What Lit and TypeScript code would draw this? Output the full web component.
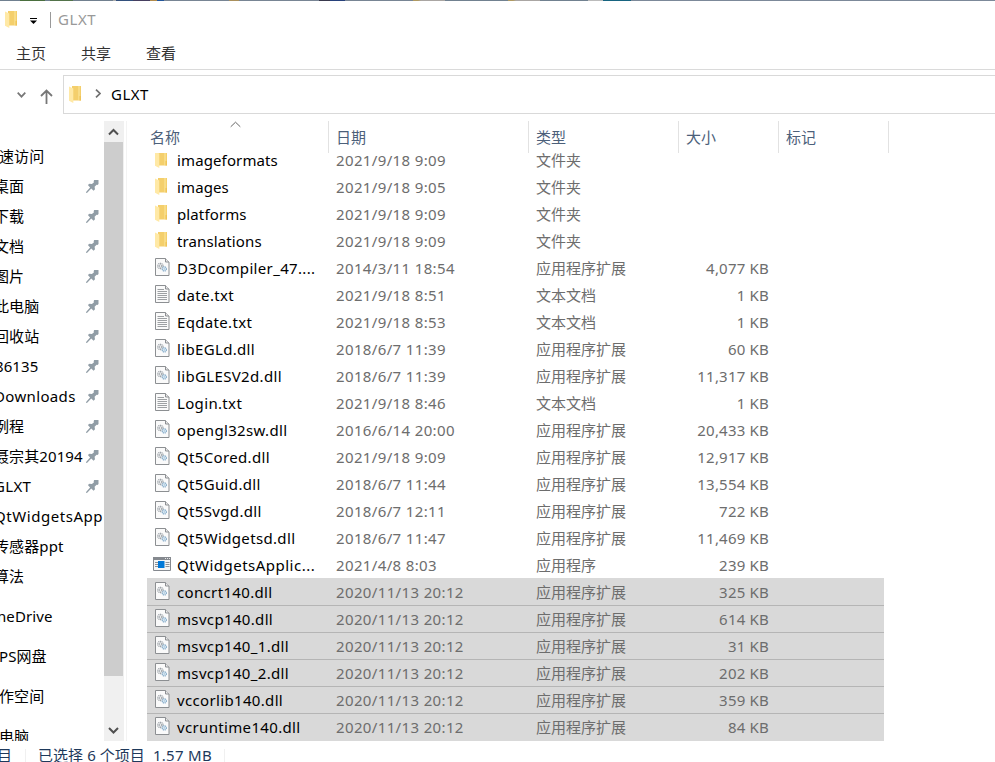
import { LitElement, html, css, svg } from "lit";
import { customElement, property } from "lit/decorators.js";
import { classMap } from "lit/directives/class-map.js";

type Kind = "folder" | "dll" | "txt" | "exe";

const TYPES: Record<Kind, string> = {
  folder: "文件夹",
  dll: "应用程序扩展",
  txt: "文本文档",
  exe: "应用程序",
};

// name, modified, kind, size
const FILES: [string, string, Kind, string][] = [
  ["imageformats", "2021/9/18 9:09", "folder", ""],
  ["images", "2021/9/18 9:05", "folder", ""],
  ["platforms", "2021/9/18 9:09", "folder", ""],
  ["translations", "2021/9/18 9:09", "folder", ""],
  ["D3Dcompiler_47....", "2014/3/11 18:54", "dll", "4,077 KB"],
  ["date.txt", "2021/9/18 8:51", "txt", "1 KB"],
  ["Eqdate.txt", "2021/9/18 8:53", "txt", "1 KB"],
  ["libEGLd.dll", "2018/6/7 11:39", "dll", "60 KB"],
  ["libGLESV2d.dll", "2018/6/7 11:39", "dll", "11,317 KB"],
  ["Login.txt", "2021/9/18 8:46", "txt", "1 KB"],
  ["opengl32sw.dll", "2016/6/14 20:00", "dll", "20,433 KB"],
  ["Qt5Cored.dll", "2021/9/18 9:09", "dll", "12,917 KB"],
  ["Qt5Guid.dll", "2018/6/7 11:44", "dll", "13,554 KB"],
  ["Qt5Svgd.dll", "2018/6/7 12:11", "dll", "722 KB"],
  ["Qt5Widgetsd.dll", "2018/6/7 11:47", "dll", "11,469 KB"],
  ["QtWidgetsApplic...", "2021/4/8 8:03", "exe", "239 KB"],
  ["concrt140.dll", "2020/11/13 20:12", "dll", "325 KB"],
  ["msvcp140.dll", "2020/11/13 20:12", "dll", "614 KB"],
  ["msvcp140_1.dll", "2020/11/13 20:12", "dll", "31 KB"],
  ["msvcp140_2.dll", "2020/11/13 20:12", "dll", "202 KB"],
  ["vccorlib140.dll", "2020/11/13 20:12", "dll", "359 KB"],
  ["vcruntime140.dll", "2020/11/13 20:12", "dll", "84 KB"],
];
const FIRST_SELECTED = 16;

const NAV: [string, number, boolean, boolean][] = [
  ["速访问", -1, false, false],
  ["桌面", -6, true, false],
  ["下载", -6, true, false],
  ["文档", -6, true, false],
  ["图片", -6, true, false],
  ["此电脑", -6, true, false],
  ["回收站", -6, true, false],
  ["86135", -5, true, false],
  ["Downloads", -6, true, false],
  ["例程", -6, true, false],
  ["聂宗其20194", -6, true, false],
  ["GLXT", -6, true, false],
  ["QtWidgetsApp", -6, false, false],
  ["传感器ppt", -6, false, false],
  ["算法", -6, false, false],
  ["neDrive", -3, false, true],
  ["PS网盘", -1, false, true],
  ["作空间", -1, false, true],
  ["电脑", -1, false, true],
];

const folder = svg`
  <path d="M3 0h9v14.500H3z" fill="#f4cf6c"/>
  <path d="M9 0h2v14H9z" fill="#f8dc86"/>
  <path d="M10.500 10h1.500v4.500h-1.500z" fill="#efc458"/>
  <path d="M0 .5L4.300 2.500V17L0 14.800z" fill="#ffe9a6"/>`;

const sheet = svg`
  <path d="M.5 .5h10l3.500 3.500v13.500H.5z" fill="#fafafa" stroke="#8c8f92"/>
  <path d="M10.500 .5v3.500h3.500" fill="#e8e8e8" stroke="#8c8f92"/>`;

const gears = svg`
  <circle cx="5.400" cy="8" r="2.700" fill="none" stroke="#969da3" stroke-width="1.200" stroke-dasharray="1.100 .6"/>
  <circle cx="5.400" cy="8" r="1.300" fill="none" stroke="#969da3" stroke-width=".8"/>
  <circle cx="9.300" cy="10.900" r="2.100" fill="#dcebf6" stroke="#86abc8" stroke-width="1.200" stroke-dasharray="1.100 .5"/>
  <circle cx="9.300" cy="10.900" r=".7" fill="#9dbdd4"/>`;

const lines = svg`<path d="M2.500 4.500h6.500M2.500 6.500h9.500M2.500 8.500h9.500M2.500 10.500h9.500M2.500 12.500h9.500M2.500 14.500h9.500" stroke="#9da0a3"/>`;

@customElement("file-icon")
class FileIcon extends LitElement {
  @property() kind: Kind = "folder";
  static styles = css`
    :host { display: block; }
    svg { display: block; overflow: visible; }
  `;
  render() {
    if (this.kind === "folder") return html`<svg width="12" height="17">${folder}</svg>`;
    if (this.kind === "exe")
      return html`<svg width="18" height="14">
        <path d="M.5 .5h17v13H.5z" fill="#f5f5f5" stroke="#85898f"/>
        <path d="M0 0h18v3H0z" fill="#85898f"/>
        <path d="M12 1.500h1M14 1.500h1M16 1.500h1" stroke="#e8e8e8"/>
        <path d="M2 5.500h3M2 7.500h3M2 9.500h3M12.500 5.500h4M12.500 7.500h4M12.500 9.500h4" stroke="#8d9197"/>
        <path d="M5 4h6.500v7H5z" fill="#0078d7"/>
      </svg>`;
    return html`<svg width="15" height="18">${sheet}${this.kind === "dll" ? gears : lines}</svg>`;
  }
}

@customElement("nav-pane")
class NavPane extends LitElement {
  static styles = css`
    :host { display: flex; width: 127px; height: 620px; box-sizing: border-box; border-right: 1px solid #f3f3f3; color: #000; }
    .list { width: 104px; height: 620px; overflow: hidden; padding-top: 20px; box-sizing: border-box; }
    .item { height: 30px; display: flex; align-items: center; justify-content: space-between; white-space: nowrap; line-height: 30px; }
    .item.group { margin-top: 10px; }
    .label { letter-spacing: .1px; flex: none; }
    .latin { letter-spacing: .35px; }
    .wide { letter-spacing: .55px; }
    .pin { flex: none; margin-right: 5px; }
    .bar { width: 20px; display: flex; flex-direction: column; background: #f0f0f0; }
    .arrow { height: 21px; display: flex; justify-content: center; align-items: center; padding-right: 2px; }
    .thumb { height: 534px; width: 19px; background: #cdcdcd; }
    .space { flex: 1; }
  `;
  render() {
    return html`
      <div class="list">
        ${NAV.map(
          ([label, shift, pinned, group]) => html`<div class=${classMap({ item: true, group })}>
            <span
              class=${classMap({ label: true, latin: /^[A-Z][A-Za-z]+$/.test(label), wide: label.startsWith("Qt") })}
              style="margin-left:${shift}px"
            >${label}</span>
            ${pinned
              ? html`<svg class="pin" width="13" height="13" viewBox="0 0 13 13">
                  <path fill="#919da6" d="M8.200 0H12.500V4L11.500 5 10.600 4.700 8.600 6.800 9 9.200 7.600 10.700 5.200 8.400 1.200 12.700 0 12.900 .3 11.700 4.100 7.400 1.900 5.100 3.400 3.800 5.900 4.100 8 2.200 7.600 1.200z"/>
                </svg>`
              : ""}
          </div>`
        )}
      </div>
      <div class="bar">
        <div class="arrow"><svg width="11" height="8"><path d="M1 6.500l4.500-4.500L10 6.500" fill="none" stroke="#505050" stroke-width="2"/></svg></div>
        <div class="thumb"></div>
        <div class="space"></div>
        <div class="arrow"><svg width="11" height="8"><path d="M1 1l4.500 4.500L10 1" fill="none" stroke="#505050" stroke-width="2"/></svg></div>
      </div>
    `;
  }
}

@customElement("file-list")
class FileList extends LitElement {
  static styles = css`
    :host { display: block; flex: 1; margin-left: 20px; height: 620px; overflow: hidden; }
    .head { display: flex; height: 32px; color: #4c607a; line-height: 32px; }
    .cell { box-sizing: border-box; border-right: 1px solid #e2e2e2; padding-left: 7px; position: relative; }
    .c1 { width: 182px; padding-left: 3px; }
    .c2 { width: 200px; }
    .c3 { width: 150px; }
    .c4 { width: 100px; }
    .c5 { width: 110px; }
    .sort { position: absolute; left: 83px; top: 0; }
    .rows { height: 588px; display: flex; flex-direction: column; justify-content: flex-end; overflow: hidden; }
    .row { width: 737px; height: 27px; flex: none; box-sizing: border-box; display: grid; grid-template-columns: 30px 159px 200px 110px 123px; line-height: 29px; white-space: nowrap; color: #6d6d6d; }
    .sel { background: #d9d9d9; }
    .sel + .sel { box-shadow: inset 0 1px #b5b5b5; }
    .row:last-child { height: 28px; }
    .icon { padding: 4px 0 0 8px; height: 19px; }
    .icon.folder { padding-top: 5px; }
    .icon.exe { padding: 6px 0 0 6px; }
    .name { color: #000; letter-spacing: .34px; }
    .name.folder { letter-spacing: .12px; }
    .name.exe { letter-spacing: .48px; }
    .date { letter-spacing: .36px; }
    .size { text-align: right; letter-spacing: .2px; }
  `;
  render() {
    return html`
      <div class="head">
        <div class="cell c1">名称
          <svg class="sort" width="11" height="7"><path d="M.7 5.800l4.800-4.600 4.800 4.600" fill="none" stroke="#666"/></svg>
        </div>
        <div class="cell c2">日期</div>
        <div class="cell c3">类型</div>
        <div class="cell c4">大小</div>
        <div class="cell c5">标记</div>
      </div>
      <div class="rows">
        ${FILES.map(
          ([name, date, kind, size], i) => html`<div class=${classMap({ row: true, sel: i >= FIRST_SELECTED })}>
            <div class="icon ${kind}"><file-icon .kind=${kind}></file-icon></div>
            <div class="name ${kind}">${name}</div>
            <div class="date">${date}</div>
            <div class="type">${TYPES[kind]}</div>
            <div class="size">${size}</div>
          </div>`
        )}
      </div>
    `;
  }
}

@customElement("app-root")
class AppRoot extends LitElement {
  static styles = css`
    :host { display: flex; flex-direction: column; width: 995px; height: 762px; overflow: hidden; background: #fff; font: 15px "Noto Sans", "Noto Sans CJK SC", sans-serif; }
    svg { display: block; }
    .edge { height: 1px; flex: none; background: linear-gradient(90deg, #708090 0 20px, #4a6f3e 20px 45px, #708090 45px 50px, #52734a 50px 73px, #71808f 73px 113px, #aaa 113px 116px, #33507c 116px 133px, #463f60 133px 150px, #b28b4b 150px 157px, #24569a 157px 164px, #788594 164px 229px, #a9905d 229px 239px, #788594 239px 319px, #39394d 319px 330px, #27417b 330px 345px, #788594 345px 413px, #b09a62 413px 418px, #aaa6a3 421px 445px, #718190 445px 508px, #b09a62 508px 513px, #aaa6a3 516px 540px, #718190 540px 588px, #bbb 588px 603px, #176480 603px 631px, #7c8999 631px); }
    .title { height: 37px; flex: none; display: flex; align-items: center; color: #999; }
    .tfolder { margin: 0 0 0 5px; }
    .quick { margin: 3px 0 0 13px; }
    .rule { width: 1px; height: 16px; background: #999; margin-left: 13px; margin-top: 1px; }
    .caption { margin: -2px 0 0 7px; letter-spacing: .6px; }
    .tabs { height: 31px; flex: none; display: flex; gap: 35px; padding-left: 16px; line-height: 31px; color: #333; border-bottom: 1px solid #dadada; }
    .address { height: 51px; flex: none; display: flex; align-items: flex-start; box-sizing: border-box; padding-top: 5px; }
    .down { margin: 17px 0 0 17px; }
    .up { margin: 14px 0 0 14px; }
    .box { height: 39px; flex: 1; margin-left: 10px; box-sizing: border-box; border: 1px solid #d9d9d9; border-right: 0; display: flex; align-items: center; color: #000; }
    .afolder { margin: 0 0 0 5px; }
    .chev { margin: 0 10px 2px 14px; }
    .crumb { margin-top: -2px; letter-spacing: .5px; }
    .main { display: flex; height: 620px; flex: none; }
    .status { height: 21px; flex: none; display: flex; color: #1e395b; line-height: 29px; white-space: nowrap; }
    .count { width: 25px; }
    .count span { margin-left: -3px; }
    .line { width: 1px; margin-top: 8px; background: #f0f0f0; }
    .chosen { margin-left: 12px; letter-spacing: .06px; }
    .bytes { margin-left: 8px; width: 71px; letter-spacing: .3px; }
  `;
  render() {
    return html`
      <div class="edge"></div>
      <div class="title">
        <svg class="tfolder" width="12" height="17">${folder}</svg>
        <svg class="quick" width="7" height="6"><path d="M0 .5h7" stroke="#000"/><path d="M0 2.500h7L3.500 6z"/></svg>
        <div class="rule"></div>
        <div class="caption">GLXT</div>
      </div>
      <div class="tabs"><span>主页</span><span>共享</span><span>查看</span></div>
      <div class="address">
        <svg class="down" width="9" height="6"><path d="M.7 .7l3.800 4 3.800-4" fill="none" stroke="#777" stroke-width="1.700"/></svg>
        <svg class="up" width="13" height="15"><path d="M6.500 15V1.500M1 7l5.500-5.500L12 7" fill="none" stroke="#777" stroke-width="1.800"/></svg>
        <div class="box">
          <svg class="afolder" width="12" height="17">${folder}</svg>
          <svg class="chev" width="6" height="9"><path d="M1 .7l4 3.800-4 3.800" fill="none" stroke="#707070" stroke-width="1.700"/></svg>
          <span class="crumb">GLXT</span>
        </div>
      </div>
      <div class="main"><nav-pane></nav-pane><file-list></file-list></div>
      <div class="status">
        <div class="count"><span>目</span></div>
        <div class="line"></div>
        <div class="chosen">已选择 6 个项目</div>
        <div class="bytes">1.57 MB</div>
        <div class="line"></div>
      </div>
    `;
  }
}
